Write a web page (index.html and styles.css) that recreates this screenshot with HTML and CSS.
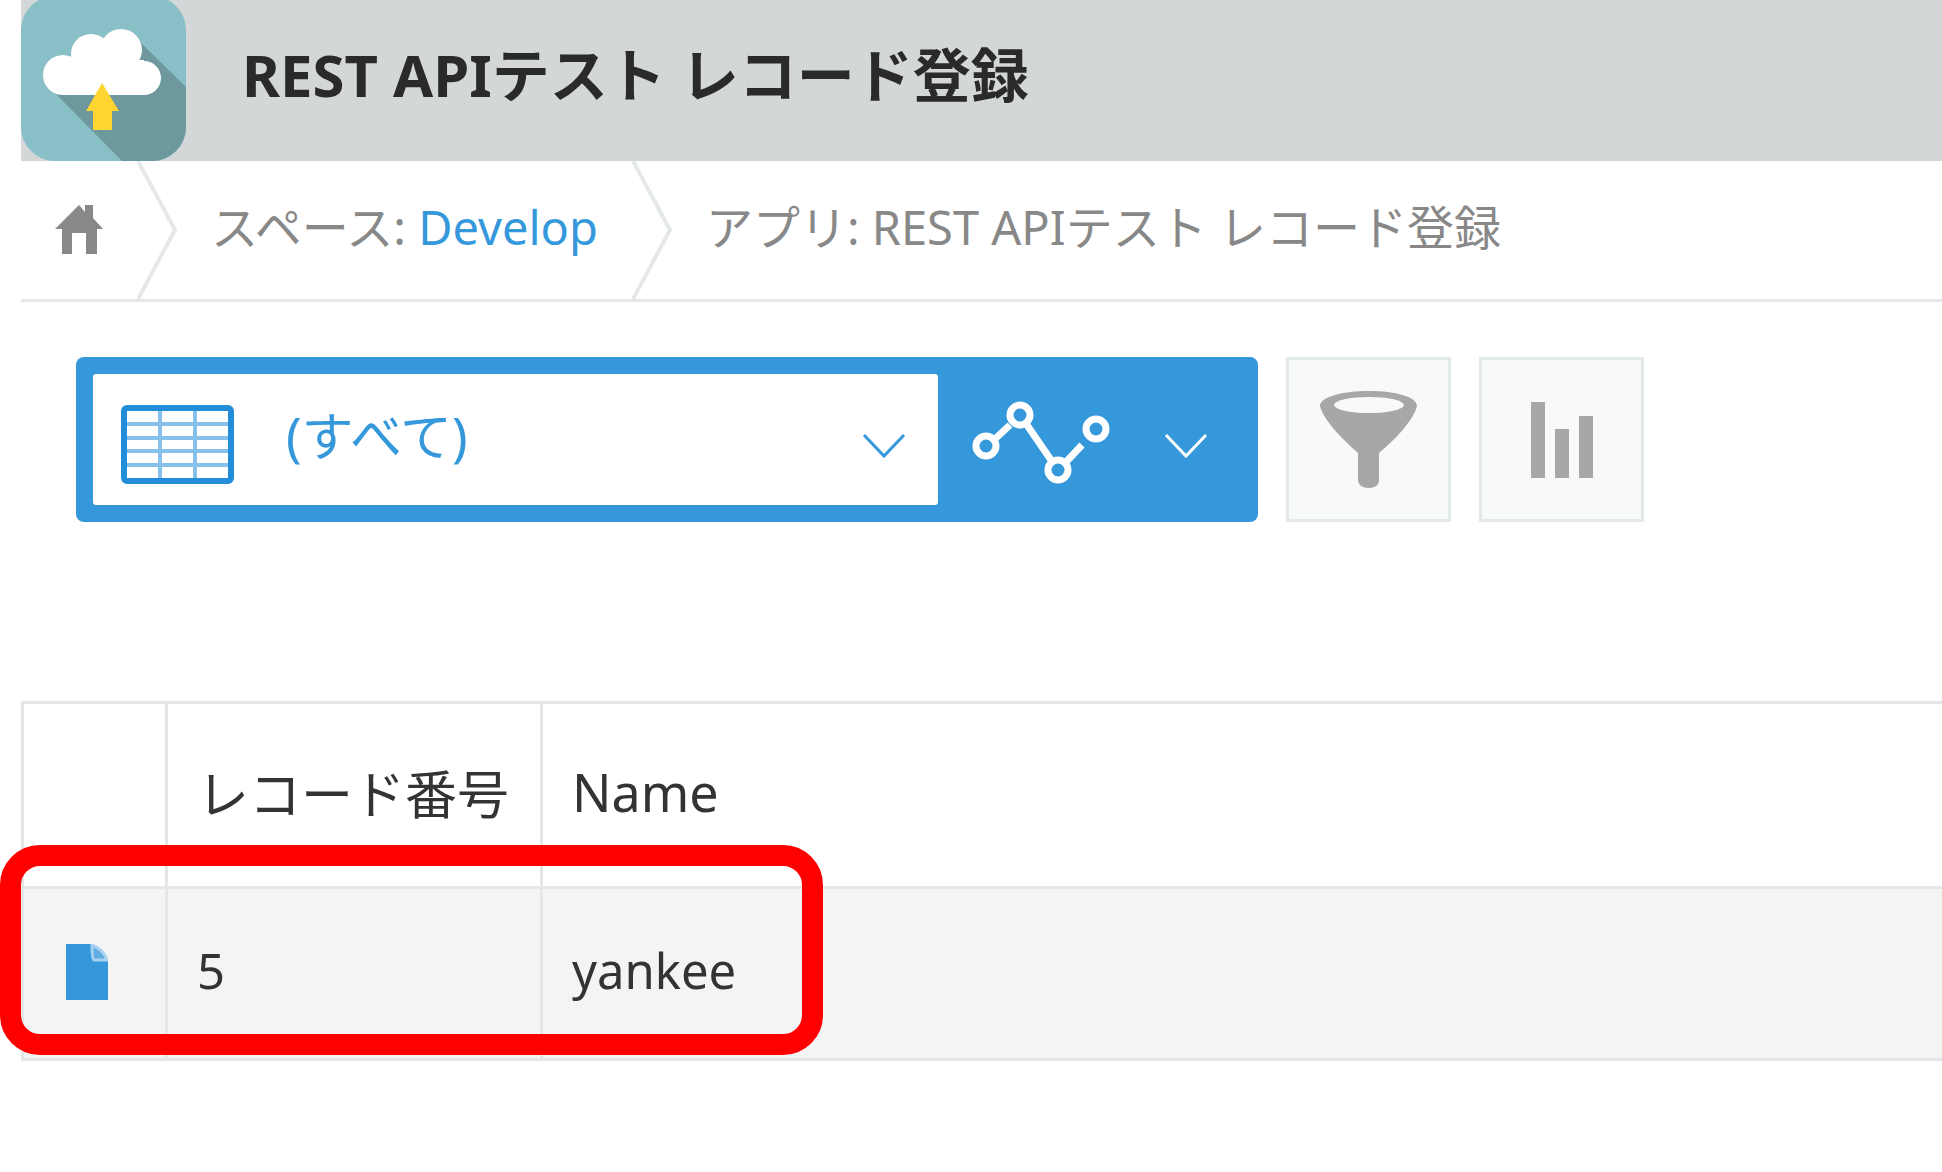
FILE: index.html
```html
<!DOCTYPE html>
<html lang="ja">
<head>
    <meta charset="UTF-8">
    <meta name="viewport" content="width=device-width, initial-scale=1.0">
    <title>REST APIテスト レコード登録</title>
    <link rel="stylesheet" href="styles.css">
</head>
<body>
    <header class="app-header">
        <svg class="app-icon" viewBox="0 4 165 161" aria-hidden="true">
            <defs>
                <clipPath id="iconShape"><rect width="165" height="165" rx="34"/></clipPath>
            </defs>
            <g clip-path="url(#iconShape)">
                <rect width="165" height="165" fill="#89bfc7"/>
                <path d="M117 44L165 91V165H101L34 97Z" fill="#6d989e"/>
                <g fill="#fff">
                    <circle cx="42" cy="79" r="20"/>
                    <circle cx="70" cy="58" r="20"/>
                    <circle cx="100" cy="54" r="21"/>
                    <circle cx="123" cy="82" r="17"/>
                    <path d="M42 64H123V99H42Z"/>
                </g>
                <path d="M81 87L98 115H91V134H72V115H65Z" fill="#ffd531"/>
            </g>
        </svg>
        <h1>REST APIテスト レコード登録</h1>
    </header>

    <nav class="breadcrumb">
        <a href="#" class="home" aria-label="ホーム">
            <svg width="48" height="50" viewBox="0 0 48 50"><path d="M24 0L30 7V0H38V13L48 24H42V49H31V28H17V49H7V24H0Z" fill="#888"/></svg>
        </a>
        <svg class="separator" viewBox="0 0 40 138" aria-hidden="true"><path d="M1 0L38 69L1 138"/></svg>
        <span>スペース: <a href="#">Develop</a></span>
        <svg class="separator" viewBox="0 0 40 138" aria-hidden="true"><path d="M1 0L38 69L1 138"/></svg>
        <span>アプリ: REST APIテスト レコード登録</span>
    </nav>

    <div class="toolbar">
        <div class="view-bar">
            <div class="view-select">
                <svg class="grid-icon" width="113" height="79" viewBox="0 0 113 79" aria-hidden="true">
                    <path d="M39 5V74M74 5V74M5 19H108M5 33H108M5 46H108M5 60H108" stroke="#85c1ea" stroke-width="4"/>
                    <rect x="3" y="3" width="107" height="73" rx="3" fill="none" stroke="#228dd8" stroke-width="6"/>
                </svg>
                <select aria-label="一覧">
                    <option>(すべて)</option>
                </select>
                <svg class="arrow" width="44" height="26" viewBox="0 0 44 26" aria-hidden="true"><path d="M2 2L22 23L42 2"/></svg>
            </div>
            <button class="graph-button" aria-label="グラフ">
                <svg class="graph-icon" width="138" height="84" viewBox="0 0 138 84" aria-hidden="true">
                    <g fill="none" stroke="#fff" stroke-width="7">
                        <path d="M24 38L38 25M55 25L79 60M94 62L110 45"/>
                        <circle cx="14" cy="46" r="10"/>
                        <circle cx="48" cy="15" r="10"/>
                        <circle cx="86" cy="70" r="10"/>
                        <circle cx="124" cy="29" r="10"/>
                    </g>
                </svg>
                <svg class="arrow" width="44" height="26" viewBox="0 0 44 26" aria-hidden="true"><path d="M2 2L22 23L42 2"/></svg>
            </button>
        </div>
        <button class="tool-button" aria-label="絞り込み">
            <svg width="98" height="97" viewBox="0 0 98 97">
                <path d="M49 0C22 0 0 6 0 15C3 28 20 46 38 62V90Q39 97 49 97Q58 97 59 90V62C78 46 94 28 97 15C97 6 76 0 49 0Z" fill="#a7a7a7"/>
                <ellipse cx="49" cy="14" rx="35" ry="8" fill="#f7f9fb"/>
            </svg>
        </button>
        <button class="tool-button" aria-label="集計">
            <svg width="62" height="76" viewBox="0 0 62 76"><path d="M0 0H14V76H0ZM24 27H38V76H24ZM48 14H62V76H48Z" fill="#a7a7a7"/></svg>
        </button>
    </div>

    <div class="records">
        <table>
            <thead>
                <tr>
                    <th class="col-icon"></th>
                    <th class="col-number">レコード番号</th>
                    <th>Name</th>
                </tr>
            </thead>
            <tbody>
                <tr>
                    <td class="col-icon">
                        <a href="#" aria-label="レコードの詳細">
                            <svg width="42" height="56" viewBox="0 0 42 56"><path d="M0 0H25L42 17V56H0Z" fill="#3498db"/><path d="M26 1Q26 16 28 16H41Q38 6 26 1Z" fill="#5fade3" stroke="#a9d1f0" stroke-width="3"/></svg>
                        </a>
                    </td>
                    <td>5</td>
                    <td>yankee</td>
                </tr>
            </tbody>
        </table>
        <div class="highlight"></div>
    </div>
</body>
</html>
```
FILE: styles.css
```css
* {
    box-sizing: border-box;
}
body {
    margin: 0;
    padding-left: 21px;
    background: #fff;
    color: #333;
    font-family: "Noto Sans", "Noto Sans CJK JP", sans-serif;
    font-size: 47px;
    overflow-x: hidden;
}
svg {
    display: block;
    flex-shrink: 0;
}
a {
    color: #3498db;
    text-decoration: none;
}
.app-header {
    display: flex;
    align-items: center;
    gap: 56px;
    background: #d3d7d7;
}
.app-icon {
    width: 165px;
    height: 161px;
}
h1 {
    margin: 0;
    padding-bottom: 12px;
    font-size: 58px;
    line-height: 80px;
    color: #2a2a2a;
    white-space: nowrap;
}
.breadcrumb {
    display: flex;
    align-items: center;
    gap: 34px;
    padding-left: 34px;
    border-bottom: 3px solid #e5e8e9;
    color: #888;
    line-height: 60px;
    white-space: nowrap;
}
.breadcrumb span {
    padding-bottom: 6px;
}
.separator {
    width: 40px;
    height: 138px;
    fill: none;
    stroke: #e5e8e9;
    stroke-width: 4px;
}
.toolbar {
    display: flex;
    gap: 28px;
    padding: 55px;
}
.view-bar {
    display: flex;
    padding: 17px;
    border-radius: 8px;
    background: #3498db;
}
.view-select {
    display: flex;
    align-items: center;
    gap: 32px;
    padding: 0 32px 0 28px;
    border-radius: 3px;
    background: #fff;
    color: #3498db;
}
.view-select select {
    width: 564px;
    padding: 0 0 8px 20px;
    border: none;
    background: none;
    color: #3498db;
    font: inherit;
    font-size: 52px;
    line-height: 70px;
    appearance: none;
}
.grid-icon {
    margin-top: 10px;
}
.graph-icon {
    margin-top: 4px;
}
.arrow {
    margin-top: 12px;
    fill: none;
    stroke: currentColor;
    stroke-width: 3px;
}
.graph-button {
    display: flex;
    align-items: center;
    gap: 54px;
    padding: 0 33px 0 34px;
    border: none;
    background: none;
    color: #fff;
    cursor: pointer;
}
.tool-button {
    display: flex;
    align-items: center;
    justify-content: center;
    width: 165px;
    height: 165px;
    padding: 0;
    border: 3px solid #e3e8e9;
    background: #f7f9fb;
    cursor: pointer;
}
.records {
    position: relative;
    margin-top: 124px;
}
table {
    width: 100%;
    border-collapse: collapse;
}
th, td {
    padding: 0 29px 8px;
    border: 3px solid #e3e7e8;
    border-right: none;
    text-align: left;
    font-weight: normal;
    white-space: nowrap;
}
th {
    height: 185px;
    font-size: 52px;
}
td {
    height: 172px;
    font-size: 49px;
}
tbody tr {
    background: #f4f4f4;
}
.col-icon {
    width: 144px;
    padding: 0 42px 4px;
}
.col-number {
    width: 375px;
}
/* red frame round the added record */
.highlight {
    position: absolute;
    top: 144px;
    left: -21px;
    width: 823px;
    height: 210px;
    border: 21px solid #f00;
    border-radius: 40px;
}
```
